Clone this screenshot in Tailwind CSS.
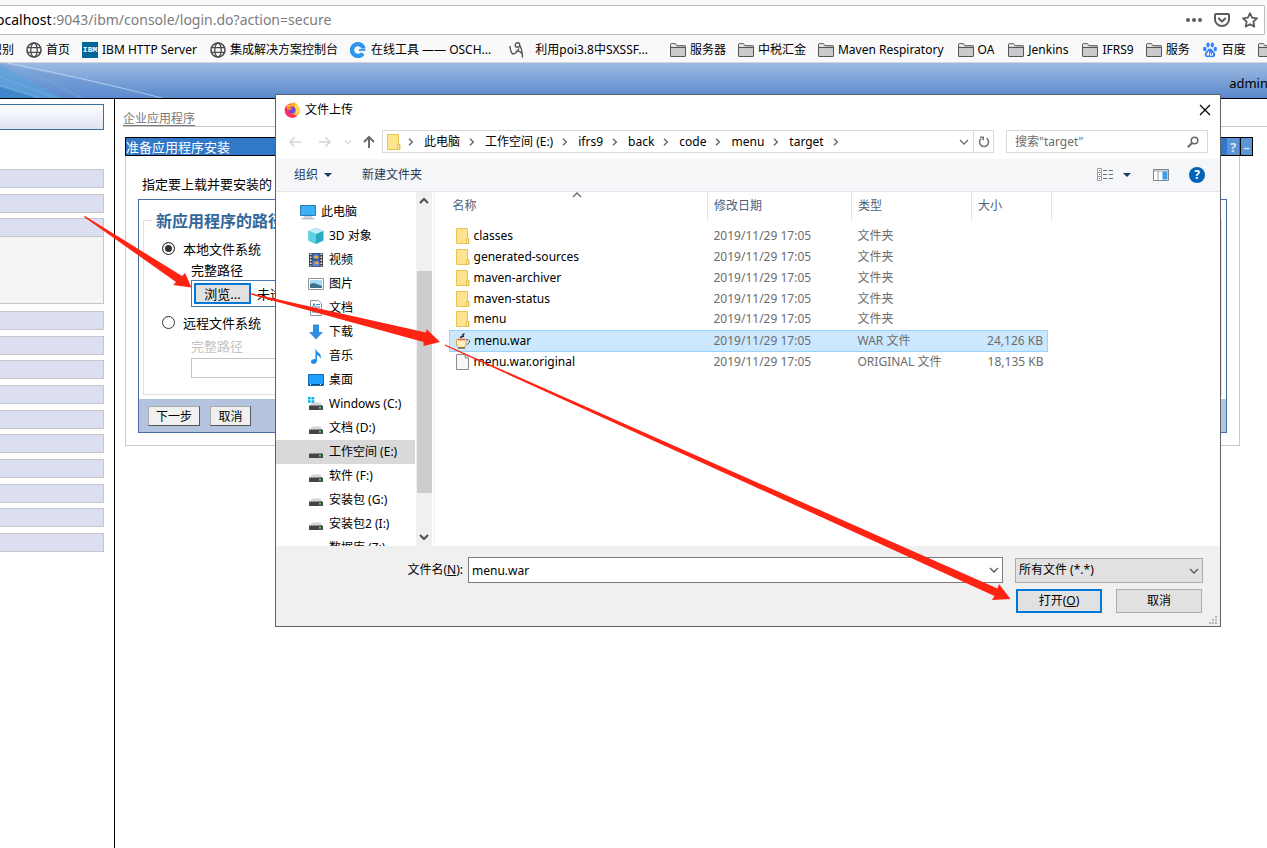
<!DOCTYPE html>
<html lang="zh-CN">
<head>
  <meta charset="UTF-8" />
  <title>集成解决方案控制台</title>
  <script src="https://cdn.jsdelivr.net/npm/@tailwindcss/browser@4"></script>
</head>
<body class="relative flex flex-col min-h-screen overflow-hidden bg-white text-black text-xs font-['Noto_Sans','Noto_Sans_CJK_SC',sans-serif]">

  <!-- shared icons -->
  <svg class="hidden">
    <symbol id="globe" viewBox="0 0 16 16">
      <g fill="none" stroke="#4a4a4f" stroke-width="1.6">
        <circle cx="8" cy="8" r="7" />
        <ellipse cx="8" cy="8" rx="3.2" ry="7" stroke-width="1.3" />
        <path d="M1.5 5.6h13M1.5 10.4h13" stroke-width="1.3" />
      </g>
    </symbol>
    <symbol id="mark-folder" viewBox="0 0 16 16">
      <path d="M.5 14V2.500q0-.8.8-.8h4.200l1.500 2h8q.5 0 .5.600V14q0 .5-.5.5H1q-.5 0-.5-.5z" fill="#cacacd" stroke="#55555a" />
      <path d="M1 5.500h14" stroke="#55555a" />
      <path d="M1.200 2.400h4l1.400 2H1.200z" fill="#f0f0f1" />
    </symbol>
    <symbol id="folder" viewBox="0 0 14 16">
      <path d="M.5.5h11v10h1.500v5H.5z" fill="#ffe48f" stroke="#e8c34d" />
      <path d="M10.500 10.500h2v5h-2z" fill="#fff1b8" stroke="#e0b640" stroke-width=".8" />
    </symbol>
    <symbol id="drive" viewBox="0 0 16 16">
      <path d="M4 6.500h8.500l2 3.500H1.500z" fill="#d3d6d9" />
      <rect x="1" y="9.500" width="14" height="4.500" rx=".6" fill="#42464a" />
      <rect x="11" y="11" width="2" height="1.500" fill="#3df06c" />
    </symbol>
    <symbol id="chev-right" viewBox="0 0 8 8">
      <path d="M2 .8L5.300 4 2 7.200" fill="none" stroke="#6b6b6b" stroke-width="1.500" />
    </symbol>
    <symbol id="chev-down" viewBox="0 0 10 10">
      <path d="M1 3l4 4 4-4" fill="none" stroke="currentColor" stroke-width="1.300" />
    </symbol>
  </svg>

  <!-- browser chrome -->
  <div class="h-[35px] bg-[#f9f9fa] pt-[5px] pr-[2px]">
    <div class="flex items-center h-[30px] bg-white border border-l-0 border-[#bdbdbf] rounded-r-xs pr-1.5">
      <p class="-ml-1 flex-1 text-sm text-[#7c7c80] whitespace-nowrap"><span class="mr-px text-black">ocalhost</span>:9043/ibm/console/login.do?action=secure</p>
      <div class="flex items-center gap-3">
        <button aria-label="页面操作"><svg class="size-4" viewBox="0 0 16 16" fill="#5b5b60"><circle cx="2" cy="8" r="2" /><circle cx="8" cy="8" r="2" /><circle cx="14" cy="8" r="2" /></svg></button>
        <button aria-label="Pocket"><svg class="size-4" viewBox="0 0 16 16" fill="none" stroke="#5b5b60" stroke-width="2" stroke-linecap="round" stroke-linejoin="round"><path d="M2 2h12q1 0 1 1v4.500a7 6.500 0 0 1-14 0V3q0-1 1-1z" /><path d="M4.800 6.500L8 9.500l3.200-3" /></svg></button>
        <button aria-label="书签"><svg class="size-4" viewBox="0 0 16 16" fill="none" stroke="#5b5b60" stroke-width="1.800" stroke-linejoin="round"><path d="M8 1.200l2.100 4.500 4.900.6-3.600 3.400.9 4.900L8 12.200l-4.300 2.400.9-4.900L1 6.300l4.900-.6z" /></svg></button>
      </div>
    </div>
  </div>
  <nav class="flex items-center gap-3 h-7 pt-[3px] bg-[#f9f9fa] border-b border-[#d5d5d8] whitespace-nowrap overflow-hidden leading-4 [&>a]:flex [&>a]:items-center [&>a]:gap-1 [&>a]:shrink-0 [&_svg]:size-4">
    <a href="#" class="-ml-2.5">识别</a>
    <a href="#"><svg><use href="#globe" /></svg>首页</a>
    <a href="#"><span class="flex items-center justify-center size-4 bg-[#006699] text-white text-[8px] font-bold font-['Liberation_Mono',monospace]">IBM</span>IBM HTTP Server</a>
    <a href="#" class="ml-px"><svg><use href="#globe" /></svg>集成解决方案控制台</a>
    <a href="#"><svg viewBox="0 0 16 16"><path d="M12 6.500h3.700A8 8 0 1 0 14 13.200L11.300 11A4.300 4.300 0 1 1 11.300 5z" fill="#2f96ee" /><circle cx="8" cy="8" r="5.800" fill="none" stroke="#2f96ee" stroke-width="4" stroke-dasharray="30 7" stroke-dashoffset="-3.500" /><path d="M9 8h6.500" stroke="#2f96ee" stroke-width="1.800" /></svg><span class="ml-px">在线工具 —— OSCH...</span></a>
    <a href="#" class="ml-1.5"><svg class="mr-1.5" viewBox="0 0 16 16" fill="none" stroke="#555" stroke-width="1.400"><path d="M1 4q.5 7 3 8 3 0 6-5.500" /><circle cx="8.500" cy="3" r="2.300" /><path d="M10 3.500q3 1 3.500 12M7 9.500q3-1.500 6 2" /></svg>利用poi3.8中SXSSF...</a>
    <a href="#" class="ml-2.5"><svg><use href="#mark-folder" /></svg>服务器</a>
    <a href="#"><svg><use href="#mark-folder" /></svg>中税汇金</a>
    <a href="#"><svg><use href="#mark-folder" /></svg>Maven Respiratory</a>
    <a href="#" class="ml-0.5"><svg><use href="#mark-folder" /></svg>OA</a>
    <a href="#" class="ml-0.5"><svg><use href="#mark-folder" /></svg>Jenkins</a>
    <a href="#" class="ml-0.5"><svg><use href="#mark-folder" /></svg>IFRS9</a>
    <a href="#"><svg><use href="#mark-folder" /></svg>服务</a>
    <a href="#"><svg viewBox="0 0 16 16" fill="#3385ff"><ellipse cx="2.800" cy="7" rx="1.800" ry="2.300" /><ellipse cx="6" cy="3" rx="1.700" ry="2.400" /><ellipse cx="10.300" cy="3" rx="1.700" ry="2.400" /><ellipse cx="13.300" cy="7" rx="1.700" ry="2.300" /><path d="M8 6.500q2 0 3 2.300 2.800 2 2.200 4.400-.7 2.500-3.200 2.100-2-.4-4 0-2.600.4-3.200-2.100-.5-2.400 2.200-4.400 1-2.300 3-2.300z" /><path d="M6.500 9.500v3.800H5.200v-2h1.300M8.500 10.800v2.500h2v-2.500" fill="none" stroke="#fff" /></svg>百度</a>
    <a href="#" aria-label="更多书签"><svg><use href="#mark-folder" /></svg></a>
  </nav>

  <!-- console banner -->
  <header class="relative flex items-center justify-end h-9 border-b border-black bg-linear-to-b from-[#9bbae2] to-[#5b89cc] overflow-hidden">
    <svg class="absolute left-0 top-0 w-[170px] h-[35px]" viewBox="0 0 170 35">
      <path d="M0 0Q80 16 160 35H0z" fill="#5f8fd0" opacity=".35" />
      <path d="M0 2l62 33H0z" fill="#55a4dc" opacity=".6" />
      <path d="M0 24l36 11H0z" fill="#3f86cc" />
      <path d="M12 0l70 35" stroke="#7eb0e0" opacity=".6" />
      <path d="M8 0q80 16 154 35" fill="none" stroke="#c4d8f0" opacity=".8" />
      <path d="M0 14l56 21M0 22l40 13" stroke="#86bde6" opacity=".4" />
    </svg>
    <span class="text-[13px] -mr-px pt-1.5">admin</span>
  </header>

  <div class="flex flex-1">
    <aside class="w-[115px] shrink-0 border-r border-black pt-[5px] pr-2.5">
      <div class="h-[26px] border border-l-0 border-[#3a6ea5] bg-linear-to-b from-white to-[#dfe3f2]"></div>
      <ul class="mt-[39px] flex flex-col gap-1.5 [&>li]:h-[19px] [&>li]:border [&>li]:border-l-0 [&>li]:border-[#c6c6cb] [&>li]:bg-[#dcdff0]">
        <li></li>
        <li></li>
      </ul>
      <div class="mt-[5px] h-[86px] border border-l-0 border-[#c6c6cb] bg-[#f5f5f5]">
        <div class="h-[18px] border-b border-[#c6c6cb] bg-[#dcdff0]"></div>
      </div>
      <ul class="mt-[7px] flex flex-col justify-between h-[241px] [&>li]:h-[19px] [&>li]:border [&>li]:border-l-0 [&>li]:border-[#c6c6cb] [&>li]:bg-[#dcdff0]">
        <li></li><li></li><li></li><li></li><li></li><li></li><li></li><li></li><li></li><li></li>
      </ul>
    </aside>

    <main class="flex-1 min-w-0 pl-2 pt-2.5">
      <p class="h-[18px] leading-5 text-[#777] border-b border-[#c8c8c8]"><span class="underline underline-offset-2">企业应用程序</span></p>
      <section class="mt-2.5 ml-0.5 mr-3.5">
        <div class="flex items-center justify-between h-[19px] bg-[#3178c8] border border-black text-white text-[13px] leading-4">
          <h1>准备应用程序安装</h1>
          <div class="flex h-full font-bold text-[#d5e6f7] [&>button]:w-3 [&>button]:bg-[#5b95d5] [&>button]:leading-4">
            <button aria-label="帮助">?</button>
            <button aria-label="最小化" class="ml-px border-l border-black">–</button>
          </div>
        </div>
        <div class="mr-[13px] h-[290px] border border-t-0 border-[#c8c8c8] px-3 pt-[18px]">
          <p class="pl-1 h-[25px] text-[13px] leading-5 whitespace-nowrap">指定要上载并要安装的</p>
          <form class="flex flex-col h-[234px] border border-[#4a6da5]">
            <div class="relative flex-1 px-1 pt-5 pb-1">
              <div class="h-full border border-[#e0e0e0]">
                <h2 class="absolute left-[13px] top-[9px] px-1 bg-white text-base leading-6 font-bold text-[#336699]">新应用程序的路径</h2>
                <div class="pl-[18px] pt-4 text-[13px] leading-5">
                  <label class="flex items-center gap-2 h-[23px]"><input type="radio" name="src" checked class="appearance-none size-[13px] rounded-full border border-[#333] bg-white checked:bg-[#333] checked:ring-2 checked:ring-inset checked:ring-white" />本地文件系统</label>
                  <div class="pl-[29px]">
                    <p>完整路径</p>
                    <div class="flex items-center gap-1.5 h-[27px] w-[300px] border border-[#4a7ab0] px-0.5">
                      <button type="button" class="w-[57px] h-[21px] leading-4 bg-[#e1e1e1] border-2 border-[#0078d7]">浏览...</button>
                      未选
                    </div>
                  </div>
                  <label class="mt-1 flex items-center gap-2 h-[23px]"><input type="radio" name="src" class="appearance-none size-[13px] rounded-full border border-[#333] bg-white" />远程文件系统</label>
                  <div class="pl-[29px]">
                    <label for="remote" class="block h-6 leading-6 text-[#c4c4c4]">完整路径</label>
                    <input id="remote" type="text" disabled class="block w-[300px] h-5 border border-[#c4c4c4]" />
                  </div>
                </div>
              </div>
            </div>
            <div class="flex items-center gap-2.5 h-[33px] pl-[9px] bg-[#b4c3de] [&>button]:h-5 [&>button]:leading-5 [&>button]:bg-[#f0f0f0] [&>button]:border [&>button]:border-[#aaa] [&>button]:border-r-[#555] [&>button]:border-b-[#555]">
              <button type="button" class="w-[52px]">下一步</button>
              <button type="button" class="w-[41px]">取消</button>
            </div>
          </form>
        </div>
      </section>
    </main>
  </div>

  <!-- file upload dialog -->
  <div role="dialog" aria-label="文件上传" class="absolute left-[275px] right-[46px] top-[94px] flex flex-col h-[533px] bg-white border border-[#5c6168] leading-4">
    <div class="flex items-center gap-[5px] h-[29px] pl-2 pr-2">
      <svg class="size-4" viewBox="0 0 16 16">
        <circle cx="8" cy="8.500" r="7.300" fill="#ff3f4e" />
        <path d="M1 6q2-4 6-3.500L10 0q5 3 5.500 7.500.3 4-3 6.500Q7 11 1 6z" fill="#ffb52b" />
        <path d="M11 1q5 4 4 9l-3 3-1-7z" fill="#ffdc45" />
        <path d="M.7 7q0 6 6 8.300 4 .8 6.300-1.300-7 0-8.500-5L2 4z" fill="#ff2b66" />
        <circle cx="8" cy="8" r="3.600" fill="#7542e5" />
        <path d="M3.500 5.500q3-1 4.500 1 0 1.500-3 1.500" fill="#ff8a16" />
      </svg>
      <span class="flex-1">文件上传</span>
      <button aria-label="关闭"><svg class="size-3.5" viewBox="0 0 14 14" stroke="#000" stroke-width="1.200"><path d="M2 2l10 10M12 2L2 12" /></svg></button>
    </div>

    <div class="flex items-center h-[35px] pl-3 pr-3">
      <div class="flex items-center">
        <button aria-label="后退"><svg class="size-3.5" viewBox="0 0 14 14" fill="none" stroke="#d5d5d5" stroke-width="1.600"><path d="M13 7H2M6.500 2.500L2 7l4.500 4.500" /></svg></button>
        <button aria-label="前进" class="ml-4"><svg class="size-3.5" viewBox="0 0 14 14" fill="none" stroke="#d5d5d5" stroke-width="1.600"><path d="M1 7h11M7.500 2.500L12 7l-4.500 4.500" /></svg></button>
        <button aria-label="最近" class="ml-3 text-[#cfcfcf]"><svg class="size-2"><use href="#chev-down" /></svg></button>
        <button aria-label="向上" class="ml-2.5"><svg class="size-3.5" viewBox="0 0 14 14" fill="none" stroke="#6b6b6b" stroke-width="2"><path d="M7 13V2M2 7l5-5 5 5" /></svg></button>
      </div>
      <div class="ml-1.5 flex flex-1 items-center h-[23px] border border-[#d9d9d9]">
        <svg class="ml-1 mr-1.5 w-3.5 h-4"><use href="#folder" /></svg>
        <ol class="flex flex-1 items-center gap-[9px] [&>li]:flex [&>li]:items-center [&_svg]:size-2">
          <li><svg><use href="#chev-right" /></svg></li>
          <li class="gap-2">此电脑 <svg><use href="#chev-right" /></svg></li>
          <li class="gap-2">工作空间 (E:) <svg><use href="#chev-right" /></svg></li>
          <li class="gap-2">ifrs9 <svg><use href="#chev-right" /></svg></li>
          <li class="gap-2">back <svg><use href="#chev-right" /></svg></li>
          <li class="gap-2">code <svg><use href="#chev-right" /></svg></li>
          <li class="gap-2">menu <svg><use href="#chev-right" /></svg></li>
          <li class="gap-2">target <svg><use href="#chev-right" /></svg></li>
        </ol>
        <button aria-label="历史" class="px-1 text-[#6b6b6b]"><svg class="size-2.5"><use href="#chev-down" /></svg></button>
        <button aria-label="刷新" class="flex items-center justify-center w-5 h-full border-l border-[#d9d9d9]"><svg class="size-3" viewBox="0 0 12 12" fill="none" stroke="#777" stroke-width="1.600"><path d="M8.500 2.200A4.500 4.500 0 1 1 3 2.700" /><path d="M2 1.200h3.200v3" /></svg></button>
      </div>
      <label class="ml-3 flex items-center w-[202px] h-[23px] border border-[#d9d9d9] pl-2 pr-2">
        <input type="search" aria-label="搜索" placeholder='搜索"target"' class="flex-1 min-w-0 outline-none placeholder:text-[#6d6d6d]" />
        <svg class="size-3" viewBox="0 0 12 12" fill="none" stroke="#6b6b6b" stroke-width="1.600"><circle cx="7.500" cy="4.500" r="3.300" /><path d="M5.200 6.800L.8 11.200" stroke-width="2" /></svg>
      </label>
    </div>

    <div class="flex items-center h-[33px] bg-[#f5f6f7] border-b border-[#e3e5e8] pl-[18px] pr-[15px] text-[#1e395b]">
      <button class="flex items-center gap-1">组织 <svg class="ml-0.5 w-2 h-1" viewBox="0 0 8 4"><path d="M0 0h8L4 4z" fill="#1e395b" /></svg></button>
      <button class="ml-[30px]">新建文件夹</button>
      <div class="ml-auto flex items-center">
        <button aria-label="视图" class="flex items-center gap-2.5">
          <svg class="w-4 h-3.5" viewBox="0 0 16 14"><path d="M.5.5h4v12h-4zM.5 4.500h4M.5 8.500h4" fill="#fff" stroke="#9aa0a8" /><path d="M6 2.500h4M11.500 2.500H16M6 6.500h4M11.500 6.500H16M6 10.500h4M11.500 10.500H16" stroke="#6e747c" /><path d="M2 2h1v1H2z" fill="#2aa050" /><path d="M2 6h1v1H2z" fill="#2f7fd8" /><path d="M2 10h1v1H2z" fill="#e02020" /></svg>
          <svg class="w-2 h-1" viewBox="0 0 8 4"><path d="M0 0h8L4 4z" fill="#1e395b" /></svg>
        </button>
        <button aria-label="预览窗格" class="ml-[22px]"><svg class="w-4 h-3" viewBox="0 0 16 12"><path d="M.5.500h15v11H.5z" fill="#fff" stroke="#7d848c" /><path d="M1 2h14M5 2v9" stroke="#9aa0a8" /><path d="M9.500 2.500h5v8h-5z" fill="#3d9ce8" /></svg></button>
        <button aria-label="帮助" class="ml-5 size-4 rounded-full bg-[#0063b8] text-white font-bold leading-4">?</button>
      </div>
    </div>

    <div class="flex flex-1 min-h-0">
      <div class="flex w-[159px] shrink-0 border-r border-[#f0f0f0]">
        <ul class="flex-1 pt-2 overflow-hidden whitespace-nowrap [&>li]:flex [&>li]:items-center [&>li]:gap-[5px] [&>li]:h-6 [&>li]:pl-8 [&_svg]:size-4 [&_svg]:shrink-0">
          <li class="-ml-2"><svg viewBox="0 0 16 16"><path d="M.5 1.500h15v10H.5z" fill="#3bb0f5" stroke="#2b7cb5" /><path d="M4 13h8M1.500 14.800h13" stroke="#9aa8b5" /></svg>此电脑</li>
          <li><svg viewBox="0 0 16 16"><path d="M8 0l7.500 3v9.500L8 16 .5 12.500V3z" fill="#27a9c4" /><path d="M8 0l7.500 3L8 6 .5 3z" fill="#bdeef7" /><path d="M.5 3L8 6v10L.5 12.500z" fill="#5dd0e3" /></svg>3D 对象</li>
          <li><svg viewBox="0 0 16 16"><path d="M1 1h14v14H1z" fill="#3f4246" /><path d="M4.500 1.500h7v6h-7z" fill="#3b6fd0" /><path d="M4.500 8.500h7v6h-7z" fill="#5f84d8" /><path d="M5 5l3-2 3 2-2 2zM6 12l3-3 2 3z" fill="#e9a63a" /><path d="M2.700 1.500v13M13.300 1.500v13" stroke="#fff" stroke-width="1.400" stroke-dasharray="1.500 1.500" /></svg>视频</li>
          <li><svg viewBox="0 0 16 16"><path d="M.5 2.500h15v11H.5z" fill="#fff" stroke="#8e959c" /><path d="M2 4h12v8H2z" fill="#a9d8f5" /><path d="M2 8l4-1 8 3v2H2z" fill="#3e7187" /></svg>图片</li>
          <li><svg viewBox="0 0 16 16"><path d="M2.500.5h8l3 3v12h-11z" fill="#fff" stroke="#8e959c" /><path d="M8 4.500h4M8 7h4M4 9.500h8M4 12h8M4.500 7.500l1.500-4 1.500 4" fill="none" stroke="#3d8ac4" /></svg>文档</li>
          <li><svg viewBox="0 0 16 16"><path d="M5 .5h6V8h4l-7 7.500L1 8h4z" fill="#2f8fe3" /></svg>下载</li>
          <li><svg viewBox="0 0 16 16"><path d="M7.500 0q.5 3.500 3.500 5 3 2.500 1 6 .5-3-3-4v6q-.5 2.700-3.500 2.900-3-.3-2.500-2.600.8-2.300 4.500-2.300z" fill="#1a8cea" /></svg>音乐</li>
          <li><svg viewBox="0 0 16 16"><path d="M.5 2.500h15v11H.5z" fill="#1fa2ff" stroke="#1769a8" /><path d="M1 12.500h14" stroke="#0b4d82" /><path d="M2 12.500h1M12 12.500h1" stroke="#fff" /></svg>桌面</li>
          <li><svg viewBox="0 0 16 16"><use href="#drive" /><path d="M0 1h2.700v2.500H0zM3.500 1h2.700v2.500H3.500zM0 4.200h2.700v2.500H0zM3.500 4.200h2.700v2.500H3.500z" fill="#00b4f0" /></svg>Windows (C:)</li>
          <li><svg><use href="#drive" /></svg>文档 (D:)</li>
          <li class="bg-[#d9d9d9]"><svg><use href="#drive" /></svg>工作空间 (E:)</li>
          <li><svg><use href="#drive" /></svg>软件 (F:)</li>
          <li><svg><use href="#drive" /></svg>安装包 (G:)</li>
          <li><svg><use href="#drive" /></svg>安装包2 (I:)</li>
          <li><svg class="invisible"></svg>数据库 (Z:)</li>
        </ul>
        <div class="flex flex-col items-center w-4 ml-px mr-0.5 bg-[#f0f0f0]">
          <svg class="my-1 size-2.5 shrink-0 rotate-180" viewBox="0 0 10 10"><path d="M1 3l4 4 4-4" fill="none" stroke="#505050" stroke-width="2" /></svg>
          <div class="mt-[61px] w-[15px] h-[222px] bg-[#cdcdcd]"></div>
          <svg class="mt-auto mb-1 size-2.5 shrink-0" viewBox="0 0 10 10"><path d="M1 3l4 4 4-4" fill="none" stroke="#505050" stroke-width="2" /></svg>
        </div>
      </div>

      <div class="relative flex-1 pl-3.5">
        <svg class="absolute left-[137px] -top-0.5 size-2.5 rotate-180 text-[#666]"><use href="#chev-down" /></svg>
        <table class="table-fixed w-[602px] text-[#6d6d6d] [&_td]:p-0 [&_td]:whitespace-nowrap [&_tbody_tr]:h-[21px] [&_td+td]:pl-1.5 [&_th]:p-0 [&_th]:font-normal [&_th]:text-left [&_th]:border-r [&_th]:border-[#e5e5e5] [&_th+th]:pl-1.5 [&_tbody_svg]:h-4 [&_tbody_svg]:w-3.5">
          <colgroup>
            <col class="w-[258px]" />
            <col class="w-[144px]" />
            <col class="w-[120px]" />
            <col class="w-[76px]" />
            <col class="w-1" />
          </colgroup>
          <thead>
            <tr class="h-7 text-[#4c607a]">
              <th><span class="pl-[3px]">名称</span></th>
              <th>修改日期</th>
              <th>类型</th>
              <th colspan="2">大小</th>
            </tr>
            <tr class="h-[5px]"></tr>
          </thead>
          <tbody>
            <tr>
              <td><div class="flex items-center gap-1 pl-1.5 text-black"><svg><use href="#folder" /></svg>classes</div></td>
              <td>2019/11/29 17:05</td><td>文件夹</td><td></td>
            </tr>
            <tr>
              <td><div class="flex items-center gap-1 pl-1.5 text-black"><svg><use href="#folder" /></svg>generated-sources</div></td>
              <td>2019/11/29 17:05</td><td>文件夹</td><td></td>
            </tr>
            <tr>
              <td><div class="flex items-center gap-1 pl-1.5 text-black"><svg><use href="#folder" /></svg>maven-archiver</div></td>
              <td>2019/11/29 17:05</td><td>文件夹</td><td></td>
            </tr>
            <tr>
              <td><div class="flex items-center gap-1 pl-1.5 text-black"><svg><use href="#folder" /></svg>maven-status</div></td>
              <td>2019/11/29 17:05</td><td>文件夹</td><td></td>
            </tr>
            <tr>
              <td><div class="flex items-center gap-1 pl-1.5 text-black"><svg><use href="#folder" /></svg>menu</div></td>
              <td>2019/11/29 17:05</td><td>文件夹</td><td></td>
            </tr>
            <tr class="[&>td]:bg-[#cce8ff] [&>td]:border-y [&>td]:border-[#99d1ff]">
              <td class="border-l"><div class="flex items-center gap-1 pl-1.5 text-black"><svg viewBox="0 0 14 16"><path d="M.5 6.500h9.500v5.500L8.500 14.500H2L.5 12z" fill="#ffeec0" stroke="#d9a24a" /><path d="M10.500 6.500l3 1v2l-3 2.500" fill="none" stroke="#3c2a12" stroke-dasharray="2 1" /><path d="M2 6.500h7" stroke="#e8653a" stroke-width="1.600" /><path d="M4 4.500l4-1.500M6 2.500l2.500-2" stroke="#2a2a30" stroke-width="1.400" /><path d="M2 15h7" stroke="#4a3414" /></svg>menu.war</div></td>
              <td>2019/11/29 17:05</td><td>WAR 文件</td><td class="border-r"><div class="pr-1 text-right">24,126 KB</div></td>
            </tr>
            <tr>
              <td><div class="flex items-center gap-1 pl-1.5 text-black"><svg viewBox="0 0 14 16"><path d="M.5.5h8.500L12.500 4v11.500H.5z" fill="#f8f8f8" stroke="#8c8c8c" /><path d="M9 .5V4h3.500" fill="none" stroke="#8c8c8c" /></svg>menu.war.original</div></td>
              <td>2019/11/29 17:05</td><td>ORIGINAL 文件</td><td><div class="pr-1 text-right">18,135 KB</div></td>
            </tr>
          </tbody>
        </table>
      </div>
    </div>

    <div class="relative h-20 bg-[#f0f0f0] pt-[11px] pr-[17px]">
      <div class="flex items-center">
        <label for="filename" class="w-48 pr-[5px] text-right">文件名(<u>N</u>):</label>
        <div class="relative flex-1 mr-3">
          <input id="filename" type="text" value="menu.war" class="block w-full h-[26px] bg-white border border-[#7a7a7a] pl-[3px]" />
          <svg class="absolute right-1 top-2 size-2.5 text-[#555]"><use href="#chev-down" /></svg>
        </div>
        <div class="relative w-[188px]">
          <select aria-label="文件类型" class="block appearance-none w-full h-[25px] bg-[#e1e1e1] border border-[#adadad] pl-[3px]">
            <option>所有文件 (*.*)</option>
          </select>
          <svg class="absolute right-1 top-2 size-2.5 text-[#555]"><use href="#chev-down" /></svg>
        </div>
      </div>
      <div class="mt-1.5 flex justify-end gap-3.5 pr-px [&>button]:w-[86px] [&>button]:h-6 [&>button]:bg-[#e1e1e1]">
        <button class="border-2 border-[#0078d7]">打开(<u>O</u>)</button>
        <button class="border border-[#adadad]">取消</button>
      </div>
      <svg class="absolute right-[3px] bottom-0.5 size-2" viewBox="0 0 8 8" fill="#b8b8b8"><path d="M6 0h2v2H6zM3 3h2v2H3zM6 3h2v2H6zM0 6h2v2H0zM3 6h2v2H3zM6 6h2v2H6z" /></svg>
    </div>
  </div>

  <!-- step arrows -->
  <svg class="absolute left-0 top-0 w-[1267px] h-[848px] pointer-events-none" viewBox="0 0 1267 848" fill="#ff2314">
    <path d="M84 217l1-1 97 60 3-3 6.500 14.500-18.500-2.500 3-3z" />
    <path d="M249 294l1-1 176 39.500.5-3.500L440 342l-16.500 4v-4z" />
    <path d="M444.500 345.500l.5-1L997.500 588.500l1.500-4.500L1010.500 599l-18.500 1 2.500-4z" />
  </svg>
</body>
</html>
